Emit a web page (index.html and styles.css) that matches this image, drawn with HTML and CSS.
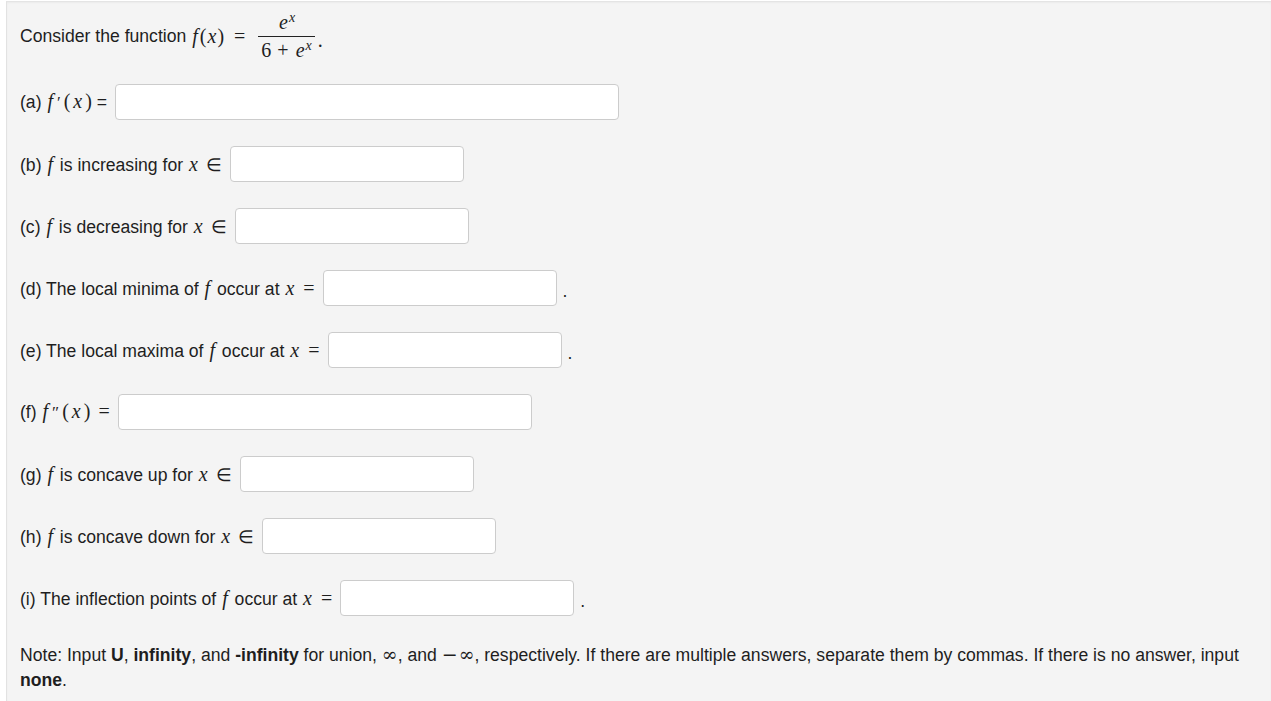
FILE: index.html
```html
<!DOCTYPE html>
<html>
<head>
<meta charset="utf-8">
<link rel="stylesheet" href="styles.css">
</head>
<body>
<div class="panel">
  <div class="row first">
    <span class="txt">Consider the function</span>
    <span class="m lead"><i class="vf">f</i>(<i class="vx">x</i>)<span class="rel">=</span></span>
    <span class="frac">
      <span class="num"><i class="vx">e</i><sup><i>x</i></sup></span>
      <span class="den">6<span class="op">+</span><i class="vx">e</i><sup><i>x</i></sup></span>
    </span>
    <span class="m dot">.</span>
  </div>

  <div class="row">
    <span class="txt">(a) <span class="m"><i class="vf">f</i><span class="pr">′</span><span class="args">(<i class="vx">x</i>)</span></span> <span class="eq">=</span></span>
    <input class="ans w-a" type="text">
  </div>

  <div class="row">
    <span class="txt">(b) <span class="m"><i class="vf">f</i></span> is increasing for <span class="m"><i class="vx">x</i><span class="rel in">∈</span></span></span>
    <input class="ans w-s" type="text">
  </div>

  <div class="row">
    <span class="txt">(c) <span class="m"><i class="vf">f</i></span> is decreasing for <span class="m"><i class="vx">x</i><span class="rel in">∈</span></span></span>
    <input class="ans w-s" type="text">
  </div>

  <div class="row">
    <span class="txt">(d) The local minima of <span class="m"><i class="vf">f</i></span> occur at <span class="m"><i class="vx">x</i><span class="rel is">=</span></span></span>
    <input class="ans w-s" type="text">
    <span class="period">.</span>
  </div>

  <div class="row">
    <span class="txt">(e) The local maxima of <span class="m"><i class="vf">f</i></span> occur at <span class="m"><i class="vx">x</i><span class="rel is">=</span></span></span>
    <input class="ans w-s" type="text">
    <span class="period">.</span>
  </div>

  <div class="row">
    <span class="txt">(f) <span class="m"><i class="vf">f</i><span class="pr">″</span><span class="args">(<i class="vx">x</i>)</span><span class="rel is">=</span></span></span>
    <input class="ans w-f" type="text">
  </div>

  <div class="row">
    <span class="txt">(g) <span class="m"><i class="vf">f</i></span> is concave up for <span class="m"><i class="vx">x</i><span class="rel in">∈</span></span></span>
    <input class="ans w-s" type="text">
  </div>

  <div class="row">
    <span class="txt">(h) <span class="m"><i class="vf">f</i></span> is concave down for <span class="m"><i class="vx">x</i><span class="rel in">∈</span></span></span>
    <input class="ans w-s" type="text">
  </div>

  <div class="row">
    <span class="txt">(i) The inflection points of <span class="m"><i class="vf">f</i></span> occur at <span class="m"><i class="vx">x</i><span class="rel is">=</span></span></span>
    <input class="ans w-s" type="text">
    <span class="period">.</span>
  </div>

  <p class="note">Note: Input <b>U</b>, <b>infinity</b>, and <b>-infinity</b> for union, <span class="m inf">∞</span>, and <span class="m inf"><span class="minus">−</span>∞</span>, respectively. If there are multiple answers, separate them by commas. If there is no answer, input <b>none</b>.</p>
</div>
</body>
</html>
```

FILE: styles.css
```css
html, body {
  margin: 0;
  padding: 0;
  background: #ffffff;
}

body {
  font-family: "Liberation Sans", Arial, sans-serif;
  font-size: 17.6px;
  color: #1e1e1e;
}

.panel {
  margin: 1px 0 0 6px;
  min-height: 700px;
  box-sizing: border-box;
  background: #f4f4f4;
  border-left: 1px solid #e2e2e2;
  border-top: 1px solid #e4e4e4;
  box-shadow: inset 0 1px 2px rgba(0, 0, 0, 0.04);
  padding: 0 13px 0 13px;
}

.row {
  display: flex;
  align-items: center;
  height: 36px;
  margin-bottom: 26px;
  white-space: nowrap;
}

.row.first {
  height: 52px;
  padding-top: 8px;
  margin-bottom: 22px;
}

.txt {
  line-height: 20px;
}

.m {
  font-family: "Liberation Serif", "Times New Roman", serif;
  font-size: 20px;
}

.m i {
  font-style: italic;
}

.vf {
  padding: 0 2px 0 1px;
}

.vx {
  padding: 0 1px;
}

.pr {
  font-size: 17px;
  margin: 0 3px 0 2px;
}

.args .vx {
  padding: 0 3px;
}

.eq {
  margin-right: 6px;
}

.rel {
  margin: 0 5px 0 6px;
}

.rel.is {
  margin: 0 6px 0 8px;
}

.rel.in {
  font-size: 18px;
  margin: 0 6px 0 7px;
}

.lead {
  margin-left: 5px;
}

.first .rel {
  margin: 0 13px 0 10px;
}

.frac {
  display: inline-flex;
  flex-direction: column;
  align-items: center;
  font-family: "Liberation Serif", "Times New Roman", serif;
  font-size: 20px;
  line-height: 22px;
}

.frac sup {
  font-size: 14px;
  line-height: 0;
  vertical-align: 7px;
}

.num {
  padding: 0 2px 3px;
  border-bottom: 1px solid #222;
  align-self: stretch;
  text-align: center;
}

.den {
  padding: 2px 3px 0;
}

.op {
  margin: 0 6px;
}

.dot {
  margin-left: 3px;
  align-self: center;
  padding-top: 8px;
}

.ans {
  box-sizing: border-box;
  height: 36px;
  margin: 0 0 0 2px;
  padding: 0 6px;
  border: 1px solid #cccccc;
  border-radius: 4px;
  background: #ffffff;
  font-family: "Liberation Sans", Arial, sans-serif;
  font-size: 16px;
  outline: none;
}

.w-a { width: 504px; }
.w-s { width: 234px; }
.w-f { width: 414px; }

.period {
  margin-left: 6px;
  padding-top: 6px;
}

.note {
  margin: 26px 0 0 0;
  line-height: 25px;
}

.note b {
  font-weight: bold;
}

.inf {
  font-family: "DejaVu Serif", serif;
  font-size: 19px;
}

.minus {
  margin-right: 1px;
}
```
